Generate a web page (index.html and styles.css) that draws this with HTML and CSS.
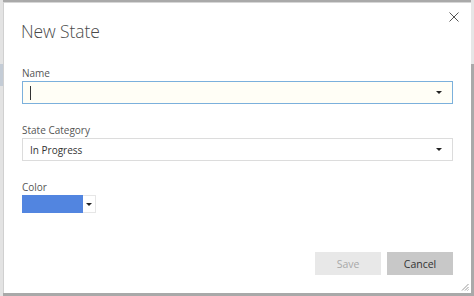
FILE: index.html
```html
<!DOCTYPE html>
<html lang="en">
<head>
  <meta charset="UTF-8">
  <title>New State</title>
  <link rel="stylesheet" href="styles.css">
</head>
<body>
  <div class="dialog">
    <!-- Header -->
    <div class="header">
      <div class="title">New State</div>
      <button class="close" aria-label="Close">
        <svg width="10" height="10" viewBox="0 0 10 10">
          <path d="M0.5 0.5 L9.5 9.5 M9.5 0.5 L0.5 9.5" stroke="#555" stroke-width="1" fill="none"/>
        </svg>
      </button>
    </div>

    <!-- Fields -->
    <div class="field first">
      <div class="label">Name</div>
      <div class="combo focused">
        <span class="cursor"></span>
        <span class="caret"></span>
      </div>
    </div>

    <div class="field">
      <div class="label">State Category</div>
      <div class="combo">
        <span class="value">In Progress</span>
        <span class="caret"></span>
      </div>
    </div>

    <div class="field">
      <div class="label">Color</div>
      <div class="color-picker">
        <div class="swatch"></div>
        <div class="swatch-drop"><span class="caret"></span></div>
      </div>
    </div>

    <!-- Buttons -->
    <div class="footer">
      <button class="btn save" disabled>Save</button>
      <button class="btn cancel">Cancel</button>
    </div>

    <svg class="grip" width="8" height="8" viewBox="0 0 8 8">
      <path d="M7.5 1 L1 7.5 M7.5 4 L4 7.5 M7.5 6.5 L6.5 7.5" stroke="#999" stroke-width="1" fill="none"/>
    </svg>
  </div>
</body>
</html>
```

FILE: styles.css
```css
body {
  margin: 0;
  height: 296px;
  overflow: hidden;
  font-family: 'Open Sans', 'Noto Sans', sans-serif;
  background:
    linear-gradient(#c4ccd6, #c4ccd6) 0 64px / 3px 22px no-repeat,
    linear-gradient(#e3e3e3, #e3e3e3) 0 0 / 3px 100% no-repeat,
    linear-gradient(#e6e6e6, #e6e6e6) 100% 0 / 3px 64px no-repeat,
    #a9a9a9;
}

.dialog {
  position: relative;
  box-sizing: border-box;
  width: 468px;
  height: 291px;
  margin: 2px 0 0 3px;
  padding: 16px 18px 0 18px;
  background: #fff;
  border-left: 1px solid #d0d0d0;
  border-top: 1px solid #d6d6d6;
  display: flex;
  flex-direction: column;
}

.header {
  display: flex;
  justify-content: space-between;
  align-items: flex-start;
}

.title {
  font-size: 17.5px;
  line-height: 24px;
  font-weight: 300;
  color: #4a4a4a;
  margin-left: -1px;
  letter-spacing: -0.1px;
}

.close {
  border: none;
  background: none;
  padding: 0;
  margin: -7px -6px 0 0;
  width: 10px;
  height: 10px;
  display: flex;
}

.field {
  margin-top: 19px;
}

.field.first {
  margin-top: 23px;
}

.label {
  font-size: 10px;
  line-height: 14px;
  color: #555;
  margin-bottom: 1px;
}

.combo {
  box-sizing: border-box;
  height: 23px;
  border: 1px solid #dcdcdc;
  background: #fff;
  display: flex;
  align-items: center;
  padding: 0 10px 0 7px;
}

.combo.focused {
  border-color: #7bb0dc;
  background: #fffef6;
}

.cursor {
  width: 1px;
  height: 14px;
  background: #333;
}

.value {
  font-size: 10px;
  color: #333;
}

.caret {
  margin-left: auto;
  width: 0;
  height: 0;
  border-left: 3px solid transparent;
  border-right: 3px solid transparent;
  border-top: 3px solid #222;
}

.color-picker {
  display: flex;
  height: 18px;
}

.swatch {
  width: 61px;
  background: #5285e0;
}

.swatch-drop {
  box-sizing: border-box;
  width: 13px;
  border: 1px solid #e6e6e6;
  border-left: none;
  display: flex;
  align-items: center;
  justify-content: center;
}

.swatch-drop .caret {
  margin-left: 0;
}

.footer {
  margin-top: auto;
  margin-bottom: 18px;
  display: flex;
  justify-content: flex-end;
  gap: 6px;
}

.btn {
  width: 66px;
  height: 23px;
  border: none;
  font-family: inherit;
  font-size: 10.5px;
  padding: 0;
}

.save {
  background: #e8e8e8;
  color: #a8a8a8;
}

.cancel {
  background: #c8c8c8;
  color: #333;
}

.grip {
  position: absolute;
  right: 2px;
  bottom: 2px;
}
```
